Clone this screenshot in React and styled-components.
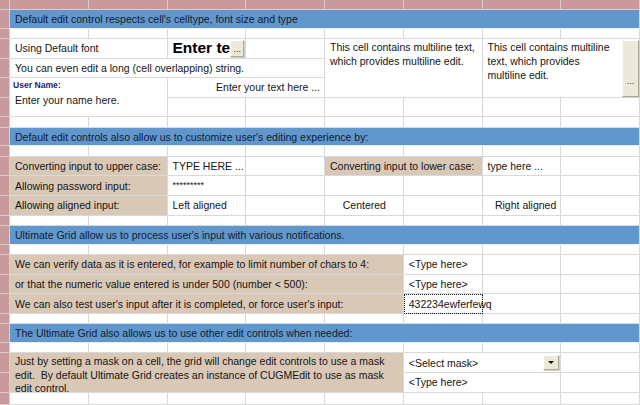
import React from 'react';
import styled, { createGlobalStyle, css } from 'styled-components';

const GlobalStyle = createGlobalStyle`
  html, body {
    margin: 0;
    padding: 0;
    background: #ffffff;
  }
  body {
    font-family: 'Liberation Sans', Arial, sans-serif;
  }
`;

// heights of the grid rows, top header first
const ROWS = [
  10, 18.5, 10.5, 19.6, 19.6, 19.6, 19.6, 10.5, 18.5, 10.5, 19.6, 19.6, 19.6,
  10.5, 18.5, 10.5, 19.6, 19.6, 19.6, 10.5, 18.5, 10.5, 19.6, 19.6,
];
const ROW_COUNT = ROWS.length + 1;
const COL_COUNT = 9;

const LINE = '#d9d9d9';

const Sheet = styled.div`
  display: grid;
  width: 640px;
  height: 405px;
  overflow: hidden;
  grid-template-columns: 10px repeat(8, 1fr);
  grid-template-rows: ${ROWS.map((r) => r + 'px').join(' ')} 1fr;
  font-family: 'Liberation Sans', Arial, sans-serif;
  font-size: 10.5px;
  color: #141414;
  background: #ffffff;
`;

const HeadCell = styled.div`
  grid-column: ${(p) => p.$col};
  grid-row: ${(p) => p.$row};
  box-sizing: border-box;
  background: #c99a9b;
  border-right: 1px solid #e4c9c9;
  border-bottom: 1px solid #e4c9c9;
`;

const tones = {
  white: '#ffffff',
  tan: '#dac8b7',
  blue: '#6197cc',
};

const Cell = styled.div`
  grid-column: ${(p) => p.$col};
  grid-row: ${(p) => p.$row};
  box-sizing: border-box;
  min-width: 0;
  position: relative;
  display: flex;
  align-items: center;
  justify-content: ${(p) => p.$align || 'flex-start'};
  padding: 0 4px 0 5px;
  white-space: pre;
  background: ${(p) => tones[p.$tone || 'white']};
  border-right: 1px solid ${LINE};
  border-bottom: 1px solid ${LINE};
`;

const Title = styled(Cell)`
  color: #0e1c33;
  border-bottom-color: #e6eef7;
`;

const Multi = styled(Cell)`
  align-items: flex-start;
  padding-top: 1px;
  line-height: 14px;
`;

const MaskNote = styled(Multi)`
  line-height: 13.5px;
  padding-top: 2px;
`;

const UserBox = styled(Cell)`
  flex-direction: column;
  align-items: flex-start;
  justify-content: flex-start;
  padding-left: 3px;
`;

const UserLabel = styled.span`
  font-size: 8.6px;
  font-weight: bold;
  color: #1f2370;
  margin-top: 2px;
  line-height: 11px;
`;

const UserValue = styled.span`
  margin-top: 3px;
  padding-left: 2px;
`;

const BigText = styled.span`
  flex: 1;
  font-size: 15.5px;
  font-weight: bold;
  color: #000;
`;

const buttonFace = css`
  box-sizing: border-box;
  background: #ece9d8;
  border: 1px solid;
  border-color: #ffffff #aca899 #aca899 #ffffff;
  box-shadow: 1px 1px 0 #d6d2c2;
`;

const EllipsisBtn = styled.div`
  ${buttonFace};
  flex: none;
  width: 14px;
  height: 17px;
  margin-right: -2px;
  display: flex;
  align-items: flex-end;
  justify-content: center;
  font-size: 9px;
  line-height: 9px;
  padding-bottom: 2px;
  color: #222;
`;

const SideBtn = styled(EllipsisBtn)`
  position: absolute;
  right: 0;
  top: 1px;
  width: 17px;
  height: 57px;
  margin: 0;
  padding-bottom: 10px;
`;

const DropBtn = styled.div`
  ${buttonFace};
  position: absolute;
  right: 1px;
  top: 2px;
  width: 16px;
  height: 15px;
  display: flex;
  align-items: center;
  justify-content: center;
`;

const Arrow = styled.span`
  width: 0;
  height: 0;
  border-left: 3px solid transparent;
  border-right: 3px solid transparent;
  border-top: 3px solid #111;
`;

const Focus = styled(Cell)`
  outline: 1px dotted #111;
  outline-offset: -1px;
  overflow: visible;
  z-index: 2;
`;

const Stars = styled.span`
  font-size: 9px;
  letter-spacing: 0;
  margin-top: -2px;
`;

const items = [
  { kind: 'title', c: [2, 10], r: [2, 3], text: "Default edit control respects cell's celltype, font size and type" },
  { kind: 'text', c: [2, 4], r: [4, 5], text: 'Using Default font' },
  { kind: 'ellipsis', c: [4, 5], r: [4, 5], text: 'Enter te' },
  { kind: 'multi', c: [6, 8], r: [4, 7], text: 'This cell contains multiline text,\nwhich provides multiline edit.' },
  { kind: 'multiBtn', c: [8, 10], r: [4, 7], text: 'This cell contains multiline\ntext, which provides\nmultiline edit.' },
  { kind: 'text', c: [2, 6], r: [5, 6], text: 'You can even edit a long (cell overlapping) string.' },
  { kind: 'user', c: [2, 4], r: [6, 8] },
  { kind: 'text', c: [4, 6], r: [6, 7], text: 'Enter your text here ...', align: 'flex-end' },

  { kind: 'title', c: [2, 10], r: [9, 10], text: "Default edit controls also allow us to customize user's editing experience by:" },
  { kind: 'label', c: [2, 4], r: [11, 12], text: 'Converting input to upper case:' },
  { kind: 'text', c: [4, 5], r: [11, 12], text: 'TYPE HERE ...' },
  { kind: 'label', c: [6, 8], r: [11, 12], text: 'Converting input to lower case:' },
  { kind: 'text', c: [8, 9], r: [11, 12], text: 'type here ...' },
  { kind: 'label', c: [2, 4], r: [12, 13], text: 'Allowing password input:' },
  { kind: 'stars', c: [4, 5], r: [12, 13], text: '*********' },
  { kind: 'label', c: [2, 4], r: [13, 14], text: 'Allowing aligned input:' },
  { kind: 'text', c: [4, 5], r: [13, 14], text: 'Left aligned' },
  { kind: 'text', c: [6, 7], r: [13, 14], text: 'Centered', align: 'center' },
  { kind: 'text', c: [8, 9], r: [13, 14], text: 'Right aligned', align: 'flex-end' },

  { kind: 'title', c: [2, 10], r: [15, 16], text: "Ultimate Grid allow us to process user's input with various notifications." },
  { kind: 'label', c: [2, 7], r: [17, 18], text: 'We can verify data as it is entered, for example to limit number of chars to 4:' },
  { kind: 'text', c: [7, 8], r: [17, 18], text: '<Type here>' },
  { kind: 'label', c: [2, 7], r: [18, 19], text: 'or that the numeric value entered is under 500 (number < 500):' },
  { kind: 'text', c: [7, 8], r: [18, 19], text: '<Type here>' },
  { kind: 'label', c: [2, 7], r: [19, 20], text: "We can also test user's input after it is completed, or force user's input:" },
  { kind: 'focus', c: [7, 8], r: [19, 20], text: '432234ewferfewq' },

  { kind: 'title', c: [2, 10], r: [21, 22], text: 'The Ultimate Grid also allows us to use other edit controls when needed:' },
  {
    kind: 'note',
    c: [2, 7],
    r: [23, 25],
    text: 'Just by setting a mask on a cell, the grid will change edit controls to use a mask\nedit.  By default Ultimate Grid creates an instance of CUGMEdit to use as mask\nedit control.',
  },
  { kind: 'select', c: [7, 9], r: [23, 24], text: '<Select mask>' },
  { kind: 'text', c: [7, 9], r: [24, 25], text: '<Type here>' },
];

function blankCells() {
  const taken = new Set();
  items.forEach(({ c, r }) => {
    for (let row = r[0]; row < r[1]; row++)
      for (let col = c[0]; col < c[1]; col++) taken.add(row + ':' + col);
  });
  const out = [];
  for (let row = 2; row <= ROW_COUNT; row++)
    for (let col = 2; col <= COL_COUNT; col++)
      if (!taken.has(row + ':' + col)) out.push({ row, col });
  return out;
}

function renderItem(item, i) {
  const place = { key: i, $col: `${item.c[0]} / ${item.c[1]}`, $row: `${item.r[0]} / ${item.r[1]}` };
  switch (item.kind) {
    case 'title':
      return <Title {...place} $tone="blue">{item.text}</Title>;
    case 'label':
      return <Cell {...place} $tone="tan">{item.text}</Cell>;
    case 'multi':
      return <Multi {...place}>{item.text}</Multi>;
    case 'multiBtn':
      return (
        <Multi {...place}>
          {item.text}
          <SideBtn>...</SideBtn>
        </Multi>
      );
    case 'note':
      return <MaskNote {...place} $tone="tan">{item.text}</MaskNote>;
    case 'ellipsis':
      return (
        <Cell {...place}>
          <BigText>{item.text}</BigText>
          <EllipsisBtn>...</EllipsisBtn>
        </Cell>
      );
    case 'user':
      return (
        <UserBox {...place}>
          <UserLabel>User Name:</UserLabel>
          <UserValue>Enter your name here.</UserValue>
        </UserBox>
      );
    case 'stars':
      return (
        <Cell {...place}>
          <Stars>{item.text}</Stars>
        </Cell>
      );
    case 'focus':
      return <Focus {...place}>{item.text}</Focus>;
    case 'select':
      return (
        <Cell {...place}>
          {item.text}
          <DropBtn>
            <Arrow />
          </DropBtn>
        </Cell>
      );
    default:
      return (
        <Cell {...place} $align={item.align}>
          {item.text}
        </Cell>
      );
  }
}

export default function App() {
  const heads = [];
  for (let col = 1; col <= COL_COUNT; col++) heads.push(<HeadCell key={'h' + col} $col={col} $row={1} />);
  for (let row = 2; row <= ROW_COUNT; row++) heads.push(<HeadCell key={'r' + row} $col={1} $row={row} />);

  return (
    <>
      <GlobalStyle />
      <Sheet>
        {heads}
        {blankCells().map(({ row, col }) => (
          <Cell key={`b${row}-${col}`} $col={col} $row={row} />
        ))}
        {items.map(renderItem)}
      </Sheet>
    </>
  );
}
